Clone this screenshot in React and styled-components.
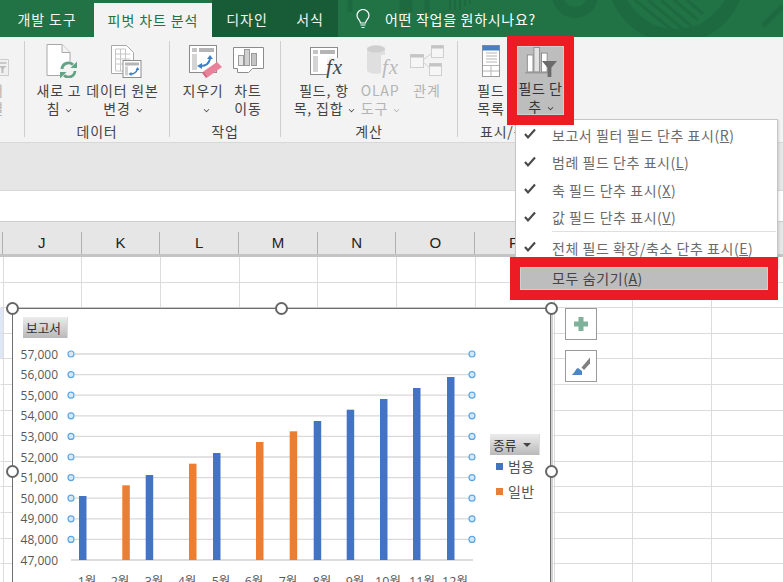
import React from "react";
import styled, { createGlobalStyle } from "styled-components";

const Global = createGlobalStyle`
  html, body {
    margin: 0;
    padding: 0;
    background: #fff;
    overflow: hidden;
  }
  body {
    font-family: "Noto Sans CJK KR", "Noto Sans", sans-serif;
  }
`;

const Page = styled.div`
  width: 783px;
  height: 582px;
  position: relative;
  overflow: hidden;
  display: flex;
  flex-direction: column;
`;

const TabBar = styled.div`
  height: 37px;
  flex: none;
  background: #217346;
  display: flex;
  align-items: flex-end;
  position: relative;
  overflow: hidden;
  color: #fff;
  font-size: 14px;
  letter-spacing: 0.9px;
`;

const Tab = styled.div`
  height: ${p => (p.$active ? "34px" : "37px")};
  width: ${p => p.$w}px;
  flex: none;
  display: flex;
  align-items: center;
  justify-content: center;
  background: ${p => (p.$active ? "#f3f3f3" : p.$dark ? "#185c37" : "transparent")};
  color: ${p => (p.$active ? "#217346" : "#f0f5f2")};
`;

const TellMe = styled.div`
  height: 37px;
  display: flex;
  align-items: center;
  gap: 14px;
  padding-left: 17px;
  position: relative;
  z-index: 1;
  letter-spacing: 0.7px;
`;

const Decoration = styled.svg`
  position: absolute;
  left: 330px;
  top: 0;
`;

const Ribbon = styled.div`
  height: 105px;
  flex: none;
  background: #f3f3f3;
  border-bottom: 1px solid #d8d8d8;
  display: flex;
  align-items: flex-start;
  position: relative;
`;

const Group = styled.div`
  width: ${p => p.$w}px;
  flex: none;
  height: 96px;
  margin-top: 4px;
  border-right: 1px solid ${p => (p.$last ? "transparent" : "#cfcfcf")};
  box-sizing: border-box;
  overflow: ${p => (p.$clip ? "hidden" : "visible")};
`;

const Commands = styled.div`
  height: 80px;
  display: flex;
  padding-left: ${p => p.$pad || 0}px;
`;

const GroupLabel = styled.div`
  height: 21px;
  font-size: 14px;
  line-height: 20px;
  color: #444;
  text-align: ${p => (p.$left ? "left" : "center")};
  padding-left: ${p => p.$left || 0}px;
  letter-spacing: 0.8px;
  white-space: nowrap;
`;

const Command = styled.div`
  width: ${p => p.$w}px;
  flex: none;
  margin-left: ${p => p.$shift || 0}px;
  display: flex;
  flex-direction: column;
  align-items: center;
  font-size: 14px;
  line-height: 18px;
  color: ${p => (p.$off ? "#b4b4b4" : "#444")};
  text-align: center;
  white-space: nowrap;
  letter-spacing: 0.8px;

  svg {
    flex: none;
    margin-bottom: 3px;
  }
`;

const Caret = styled.span`
  display: inline-block;
  width: 4px;
  height: 4px;
  margin-left: 6px;
  position: relative;
  top: -2px;
  border-right: 1px solid currentColor;
  border-bottom: 1px solid currentColor;
  transform: rotate(45deg) scale(0.8);
`;

const GrayBand = styled.div`
  height: 48px;
  flex: none;
  background: #e6e6e6;
  border-bottom: 1px solid #d8d8d8;
  box-sizing: border-box;
`;

const FormulaBar = styled.div`
  height: 30px;
  flex: none;
  background: #fff;
`;

const ColumnHeaders = styled.div`
  height: 36px;
  flex: none;
  display: flex;
  align-items: flex-end;
  box-sizing: border-box;
  background: #e6e6e6;
  border-top: 1px solid #cdcdcd;
  border-bottom: 3px solid #c4c4c4;
  padding-left: 2px;
  font-size: 15px;
  font-family: "Liberation Sans", sans-serif;
  color: #222;
`;

const ColumnHead = styled.div`
  width: 78.7px;
  flex: none;
  height: 22px;
  box-sizing: border-box;
  border-left: 1px solid #b0b0b0;
  display: flex;
  justify-content: center;
  line-height: 22px;
`;

const Sheet = styled.div`
  flex: 1;
  display: grid;
  grid-template-columns: 2.7px repeat(10, 78.7px);
  grid-auto-rows: 25.6px;
  overflow: hidden;
`;

const Cell = styled.div`
  border-left: 1px solid ${p => (p.$first ? "transparent" : "#dcdcdc")};
  border-bottom: 1px solid #dcdcdc;
  box-sizing: border-box;
  background: ${p => (p.$tint ? "#dfe7f6" : "transparent")};
`;

const ChartBox = styled.div`
  position: absolute;
  left: 12px;
  top: 308px;
  width: 539px;
  height: 300px;
  box-sizing: border-box;
  background: #fff;
  border: 1px solid #6f6f6f;
  box-shadow: 2px 0 0 #d0d0d0, 0 -1px 0 #c8c8c8;
`;

const Handle = styled.div`
  position: absolute;
  left: ${p => p.$x}px;
  top: ${p => p.$y}px;
  width: 13px;
  height: 13px;
  box-sizing: border-box;
  border-radius: 50%;
  border: 2.5px solid #666;
  background: #fff;
`;

const Plot = styled.svg`
  position: absolute;
  left: 0;
  top: 0;
  font-family: "Open Sans", "Noto Sans CJK KR", sans-serif;
`;

const FieldButton = styled.div`
  position: absolute;
  left: ${p => p.$x}px;
  top: ${p => p.$y}px;
  width: ${p => p.$w}px;
  height: 21px;
  box-sizing: border-box;
  padding: 0 3px;
  display: flex;
  align-items: center;
  justify-content: space-between;
  font-size: 12.7px;
  color: #333;
  background: linear-gradient(#ececec, #b9b9b9);
  border-right: 1px solid #dcdcdc;
`;

const DropArrow = styled.span`
  width: 0;
  height: 0;
  margin-right: 5px;
  border-left: 4px solid transparent;
  border-right: 4px solid transparent;
  border-top: 4px solid #444;
`;

const LegendEntry = styled.div`
  position: absolute;
  left: 483px;
  top: ${p => p.$y}px;
  display: flex;
  align-items: center;
  gap: 5px;
  font-size: 14px;
  line-height: 18px;
  color: #555;
  letter-spacing: 0.3px;
`;

const Swatch = styled.span`
  width: 7px;
  height: 7px;
  background: ${p => p.$color};
`;

const SideButton = styled.div`
  position: absolute;
  left: 565px;
  top: ${p => p.$y}px;
  width: 31.5px;
  height: 31.5px;
  box-sizing: border-box;
  background: #fff;
  border: 1px solid #9a9a9a;
  display: flex;
  align-items: center;
  justify-content: center;
`;

const Menu = styled.div`
  position: absolute;
  left: 515px;
  top: 119px;
  width: 263px;
  height: 150px;
  box-sizing: border-box;
  background: #fff;
  border: 1px solid #c6c6c6;
  box-shadow: 1px 1px 2px rgba(0, 0, 0, 0.12);
  padding-top: 1px;
  display: flex;
  flex-direction: column;
`;

const MenuItem = styled.div`
  height: 27.5px;
  flex: none;
  display: flex;
  align-items: center;
  padding-left: 36px;
  position: relative;
  font-size: 14px;
  color: #6a6a6a;
  white-space: nowrap;
  letter-spacing: 0.55px;

  svg {
    position: absolute;
    left: 7px;
    top: 6px;
  }
`;

const MenuSeparator = styled.div`
  height: 1px;
  margin: 0 1px 2px 36px;
  background: #e0e0e0;
  flex: none;
`;

const RedFrame = styled.div`
  position: absolute;
  left: ${p => p.$x}px;
  top: ${p => p.$y}px;
  width: ${p => p.$w}px;
  height: ${p => p.$h}px;
  box-sizing: border-box;
  border: 10px solid #ed1c24;
  background: #bdbdbd;
  box-shadow: inset 0 0 0 1px #cfcfcf;
  display: flex;
  flex-direction: column;
  align-items: center;
  font-size: 14px;
  line-height: 18px;
  color: #333;
  letter-spacing: 0.6px;
  white-space: nowrap;
`;

const HideAll = styled.div`
  padding-left: 32px;
  align-self: stretch;
  line-height: 22px;
  color: #444;
`;

// ribbon icons are drawn in page coordinates, centred on their command
const Icon = ({ cx, children }) => (
  <svg width="42" height="37" viewBox={`${cx - 21} 41 42 37`}>
    {children}
  </svg>
);

const RefreshIcon = () => (
  <Icon cx={59}>
    <path d="M47 44.500h15l8 8v23H47z" fill="#fff" stroke="#a8a8a8" />
    <path d="M62 44.500v8h8" fill="#f3f3f3" stroke="#a8a8a8" />
    <circle cx="68.500" cy="70" r="9" fill="#f3f3f3" />
    <path d="M62 69a6.500 6.500 0 0 1 11-4.200M75 71a6.500 6.500 0 0 1-11 4.200" fill="none" stroke="#5fa585" strokeWidth="2.800" />
    <path d="M70.500 68h6.500v-6.500zM66.500 72H60v6.500z" fill="#5fa585" />
  </Icon>
);

const SourceIcon = () => (
  <Icon cx={122.500}>
    <path d="M111 45.500h15l7 7v21h-22z" fill="#fff" stroke="#a8a8a8" />
    <path d="M115 49h10v22h-10zM115 54h15M115 59h15M115 64h15M120 49v22M125 52v19" fill="none" stroke="#c6c6c6" />
    <rect x="122.500" y="60.500" width="18" height="17" fill="#fff" stroke="#8c8c8c" />
    <rect x="124.500" y="62.500" width="14" height="3" fill="#b5b5b5" />
    <rect x="124.500" y="66.500" width="3" height="9" fill="#d0d0d0" />
    <path d="M130 74c4 0 6-2 7-5" fill="none" stroke="#3f7fc4" strokeWidth="1.400" />
    <path d="M135 70l2-3 2 3zM131 72l-3 2 3 2z" fill="#3f7fc4" />
  </Icon>
);

const ClearIcon = () => (
  <Icon cx={203}>
    <rect x="189.500" y="45.500" width="27" height="27" fill="#fff" stroke="#8c8c8c" />
    <rect x="192" y="48" width="5" height="4" fill="#c4c4c4" />
    <rect x="199" y="48" width="15" height="4" fill="#b5b5b5" />
    <rect x="192" y="54" width="5" height="16" fill="#d4d4d4" />
    <path d="M201 66c5 0 8-3 9-7" fill="none" stroke="#3f7fc4" strokeWidth="2" />
    <path d="M207 59l3-4 3 4zM202 63l-5 3 5 3z" fill="#3f7fc4" />
    <path d="M204 71l13-9 5 5-14 10z" fill="#e8829a" />
    <path d="M204 71l4 6-2 1-4-5z" fill="#d66a84" />
  </Icon>
);

const MoveIcon = () => (
  <Icon cx={248}>
    <path d="M233.500 47.500h30v21h-11l-4 4h-11v-4h-4z" fill="#fff" stroke="#8c8c8c" />
    <rect x="238.500" y="55.500" width="5" height="10" fill="#e6e6e6" stroke="#9a9a9a" />
    <rect x="244.500" y="49.500" width="5" height="16" fill="#d0d0d0" stroke="#9a9a9a" />
    <rect x="251.500" y="53.500" width="5" height="12" fill="#c4c4c4" stroke="#9a9a9a" />
  </Icon>
);

const FieldFxIcon = () => (
  <Icon cx={324}>
    <rect x="310.500" y="47.500" width="27" height="27" fill="#fff" stroke="#8c8c8c" />
    <rect x="313" y="50" width="5" height="4" fill="#c4c4c4" />
    <rect x="320" y="50" width="15" height="4" fill="#b5b5b5" />
    <rect x="313" y="56" width="5" height="16" fill="#d4d4d4" />
    <rect x="327" y="58" width="18" height="20" fill="#f3f3f3" />
    <text x="326" y="74" fontFamily="Liberation Serif" fontStyle="italic" fontSize="21" fill="#444">fx</text>
  </Icon>
);

const OlapIcon = () => (
  <Icon cx={380}>
    <path d="M367 49c0-5 18-5 18 0v21c0 5-18 5-18 0z" fill="#e0dfe0" />
    <ellipse cx="376" cy="49" rx="9" ry="3.500" fill="#cfcfcf" />
    <rect x="381" y="55" width="18" height="23" fill="#f3f3f3" />
    <text x="382" y="74" fontFamily="Liberation Serif" fontStyle="italic" fontSize="21" fill="#bbb">fx</text>
  </Icon>
);

const RelationIcon = () => (
  <Icon cx={427}>
    <path d="M423 60l9-7M423 62l9 8" fill="none" stroke="#cfcfcf" />
    <rect x="410.500" y="54.500" width="13" height="13" fill="#f6f6f6" stroke="#cfcfcf" />
    <rect x="410.500" y="54.500" width="13" height="3" fill="#c4c4c4" />
    <rect x="431.500" y="45.500" width="12" height="12" fill="#f6f6f6" stroke="#cfcfcf" />
    <rect x="431.500" y="45.500" width="12" height="3" fill="#c4c4c4" />
    <rect x="429.500" y="63.500" width="12" height="12" fill="#f6f6f6" stroke="#cfcfcf" />
    <rect x="429.500" y="63.500" width="12" height="3" fill="#c4c4c4" />
  </Icon>
);

const FieldListIcon = () => (
  <Icon cx={491}>
    <rect x="482.500" y="45.500" width="17" height="31" fill="#fff" stroke="#9a9a9a" />
    <rect x="482.500" y="45.500" width="17" height="5" fill="#4a7fc1" />
    <path d="M486 53h11M486 56h11M486 59h11M486 62h11M483 65.500h16M491 65.500v11M483 71h16" stroke="#b5b5b5" fill="none" />
  </Icon>
);

const FieldButtonIcon = () => (
  <svg width="46" height="35" viewBox="517 46 46 35">
    <rect x="525.500" y="55.500" width="6" height="18" fill="#fff" stroke="#8c8c8c" />
    <rect x="532.500" y="47.500" width="6" height="26" fill="#e2e2e2" stroke="#8c8c8c" />
    <rect x="540.500" y="53.500" width="6" height="20" fill="#fff" stroke="#8c8c8c" />
    <path d="M523 74.500h25" stroke="#8c8c8c" />
    <path d="M541 62h16l-6 7v10h-4V69z" fill="#6b6b6b" />
  </svg>
);

const CutFilterIcon = () => (
  <svg width="25" height="37" viewBox="-15.500 41 25 37">
    <path d="M-12 59.500H8v16h-20z" fill="#f0f0f0" stroke="#cdcdcd" />
    <path d="M-10 62H6v2h-16z" fill="#c9c9c9" />
    <path d="M-1 66H6l-3 3v4H1v-4z" fill="#bdbdbd" />
  </svg>
);

const Check = () => (
  <svg width="14" height="14" viewBox="0 0 14 14">
    <path d="M2 7l3 3.400L12 2.600" fill="none" stroke="#4a4a4a" strokeWidth="2.200" />
  </svg>
);

const Bulb = () => (
  <svg width="16" height="20" viewBox="0 0 16 20">
    <path d="M5.500 14c0-3-3.500-4-3.500-7.500a6 6 0 0 1 12 0C14 10 10.500 11 10.500 14z" fill="none" stroke="#fff" strokeWidth="1.200" />
    <path d="M5.500 16h5M6.500 18.500h3" stroke="#fff" strokeWidth="1.200" />
  </svg>
);

const columns = ["J", "K", "L", "M", "N", "O", "P", "", "", ""];
const yLabels = ["57,000", "56,000", "55,000", "54,000", "53,000", "52,000", "51,000", "50,000", "49,000", "48,000", "47,000"];
const blue = "#4472c4";
const orange = "#ed7d31";
const bars = [
  { m: "1월", x: 79, top: 496, c: blue, lx: 87 },
  { m: "2월", x: 122.300, top: 485.300, c: orange, lx: 120 },
  { m: "3월", x: 145.700, top: 475, c: blue, lx: 154 },
  { m: "4월", x: 189, top: 463.700, c: orange, lx: 187 },
  { m: "5월", x: 213, top: 453, c: blue, lx: 221 },
  { m: "6월", x: 256, top: 442, c: orange, lx: 254 },
  { m: "7월", x: 289.700, top: 431.300, c: orange, lx: 288 },
  { m: "8월", x: 313.700, top: 421, c: blue, lx: 322 },
  { m: "9월", x: 346.700, top: 409.700, c: blue, lx: 355 },
  { m: "10월", x: 380, top: 399, c: blue, lx: 388 },
  { m: "11월", x: 413, top: 388, c: blue, lx: 422 },
  { m: "12월", x: 447, top: 377, c: blue, lx: 455 }
];

const ChartPlot = () => (
  // coordinates are page coordinates minus the chart's top-left corner
  <Plot width="537" height="298" viewBox="13 309 537 298">
    {yLabels.map((label, i) => {
      const y = 354 + i * 20.6;
      return (
        <g key={label}>
          {i < 10 && <line x1="75" x2="470" y1={y} y2={y} stroke="#d9d9d9" strokeWidth="1.300" />}
          {i === 10 && <line x1="71" x2="473" y1={y} y2={y} stroke="#d0d0d0" strokeWidth="1.300" />}
          <text x="58" y={y + 4.500} textAnchor="end" fontSize="12" fill="#595959">{label}</text>
          {i < 10 && (
            <>
              <circle cx="71" cy={y} r="3" fill="#d6e8f8" stroke="#5ba7e6" strokeWidth="1.200" />
              <circle cx="472" cy={y} r="3" fill="#d6e8f8" stroke="#5ba7e6" strokeWidth="1.200" />
            </>
          )}
        </g>
      );
    })}
    {bars.map(b => (
      <g key={b.m}>
        <rect x={b.x} y={b.top} width="7.500" height={560 - b.top} fill={b.c} />
        <text x={b.lx} y="586" textAnchor="middle" fontSize="12.500" fill="#595959">{b.m}</text>
      </g>
    ))}
  </Plot>
);

const App = () => (
  <Page>
    <Global />
    <TabBar>
      <Decoration width="453" height="37" viewBox="0 0 453 37">
        <g fill="none" stroke="#1e6a40">
          <path d="M20 12V0" strokeWidth="5" />
          <path d="M76 12V0" strokeWidth="13" />
          <path d="M97 12V0" strokeWidth="5" />
          <path d="M120 10V0M125 10V0M130 10V0M135 6V0M140 4V0" strokeWidth="2" />
          <circle cx="245" cy="-5" r="17.500" strokeWidth="11" />
          <circle cx="346" cy="-26" r="62" strokeWidth="14" />
          <path d="M305 0l42 34M318 0l36 30M331 0l30 26M344 0l24 20M357 0l16 14" strokeWidth="3" />
          <path d="M433 26l20-20" strokeWidth="5" />
        </g>
      </Decoration>
      <Tab $w={94}>개발 도구</Tab>
      <Tab $w={118} $active>피벗 차트 분석</Tab>
      <Tab $w={70} $dark>디자인</Tab>
      <Tab $w={56} $dark>서식</Tab>
      <TellMe>
        <Bulb />
        어떤 작업을 원하시나요?
      </TellMe>
    </TabBar>
    <Ribbon>
      <Group $w={25} $clip>
        <Commands>
          <Command $w={40} $shift={-23} $off>
            <CutFilterIcon />
            <div>터</div>
            <div>결</div>
          </Command>
        </Commands>
      </Group>
      <Group $w={145}>
        <Commands $pad={9}>
          <Command $w={50}>
            <RefreshIcon />
            <div>새로 고</div>
            <div>침<Caret /></div>
          </Command>
          <Command $w={77}>
            <SourceIcon />
            <div>데이터 원본</div>
            <div>변경<Caret /></div>
          </Command>
        </Commands>
        <GroupLabel>데이터</GroupLabel>
      </Group>
      <Group $w={111}>
        <Commands $pad={8}>
          <Command $w={50}>
            <ClearIcon />
            <div>지우기</div>
            <div><Caret /></div>
          </Command>
          <Command $w={40}>
            <MoveIcon />
            <div>차트</div>
            <div>이동</div>
          </Command>
        </Commands>
        <GroupLabel>작업</GroupLabel>
      </Group>
      <Group $w={177}>
        <Commands $pad={7}>
          <Command $w={72}>
            <FieldFxIcon />
            <div>필드, 항</div>
            <div>목, 집합<Caret /></div>
          </Command>
          <Command $w={40} $off>
            <OlapIcon />
            <div>OLAP</div>
            <div>도구<Caret /></div>
          </Command>
          <Command $w={54} $off>
            <RelationIcon />
            <div>관계</div>
          </Command>
        </Commands>
        <GroupLabel>계산</GroupLabel>
      </Group>
      <Group $w={120} $last>
        <Commands $pad={8}>
          <Command $w={50}>
            <FieldListIcon />
            <div>필드</div>
            <div>목록</div>
          </Command>
        </Commands>
        <GroupLabel $left={22}>표시/숨기기</GroupLabel>
      </Group>
    </Ribbon>
    <GrayBand />
    <FormulaBar />
    <ColumnHeaders>
      {columns.map((c, i) => (
        <ColumnHead key={i}>{c}</ColumnHead>
      ))}
    </ColumnHeaders>
    <Sheet>
      {Array.from({ length: 14 * 11 }, (_, i) => (
        <Cell key={i} $first={i % 11 === 0} $tint={i === 22 || i === 33} />
      ))}
    </Sheet>

    <ChartBox>
      <ChartPlot />
      <FieldButton $x={10} $y={8} $w={45}>보고서</FieldButton>
      <FieldButton $x={477} $y={125} $w={50}>
        종류
        <DropArrow />
      </FieldButton>
      <LegendEntry $y={148}><Swatch $color={blue} />범용</LegendEntry>
      <LegendEntry $y={173}><Swatch $color={orange} />일반</LegendEntry>
    </ChartBox>
    <Handle $x={5.5} $y={301.5} />
    <Handle $x={274.5} $y={301.5} />
    <Handle $x={544.5} $y={301.5} />
    <Handle $x={5.5} $y={464.5} />
    <Handle $x={544.5} $y={464.5} />

    <SideButton $y={308}>
      <svg width="16" height="16" viewBox="0 0 16 16">
        <path d="M5.500 1h5v4.500H15v5h-4.500V15h-5v-4.500H1v-5h4.500z" fill="#7fb29a" />
      </svg>
    </SideButton>
    <SideButton $y={350}>
      <svg width="22" height="22" viewBox="0 0 22 22">
        <path d="M1 20c3 0 4-6 7-7l4 3 0 4z" fill="#4a86c8" />
        <path d="M11.500 12.500L20 2.500v6l-6 6.500z" fill="#808080" />
      </svg>
    </SideButton>

    <Menu>
      <MenuItem><Check />보고서 필터 필드 단추 표시(<u>R</u>)</MenuItem>
      <MenuItem><Check />범례 필드 단추 표시(<u>L</u>)</MenuItem>
      <MenuItem><Check />축 필드 단추 표시(<u>X</u>)</MenuItem>
      <MenuItem><Check />값 필드 단추 표시(<u>V</u>)</MenuItem>
      <MenuSeparator />
      <MenuItem><Check />전체 필드 확장/축소 단추 표시(<u>E</u>)</MenuItem>
    </Menu>

    <RedFrame $x={507} $y={36} $w={67} $h={89}>
      <FieldButtonIcon />
      <div>필드 단</div>
      <div>추<Caret /></div>
    </RedFrame>
    <RedFrame $x={510} $y={257} $w={268} $h={43}>
      <HideAll>모두 숨기기(<u>A</u>)</HideAll>
    </RedFrame>
  </Page>
);

export default App;
